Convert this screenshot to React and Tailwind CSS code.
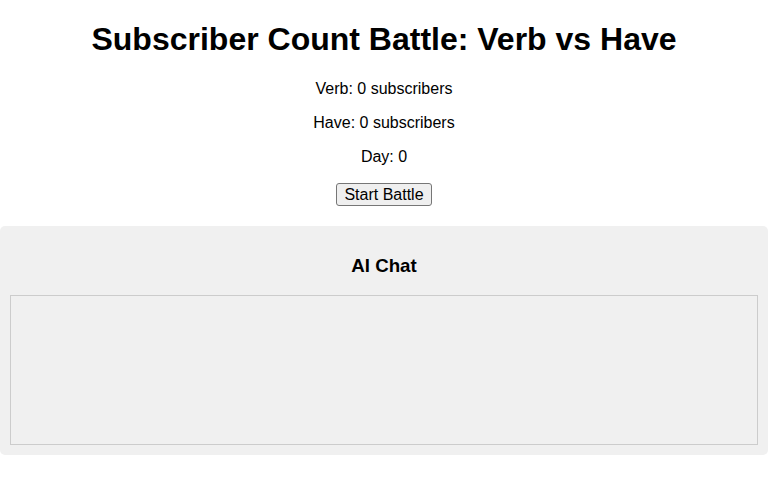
export default function App() {
  return (
    <div className="font-['Liberation_Sans',Arial,sans-serif] text-black text-base bg-white min-h-[480px] text-center">
      <h1 className="text-[32px] font-bold leading-[37px] pt-[21px]">Subscriber Count Battle: Verb vs Have</h1>
      <p className="mt-[22px] leading-[18px]">Verb: 0 subscribers</p>
      <p className="mt-4 leading-[18px]">Have: 0 subscribers</p>
      <p className="mt-4 leading-[18px]">Day: 0</p>
      <div className="mt-[17px] flex justify-center">
        <button className="bg-[#efefef] border border-[#767676] rounded-[3px] px-[7px] py-[1px] text-base leading-[19px]">Start Battle</button>
      </div>
      <div className="mt-[20px] bg-[#f0f0f0] rounded-[5px] p-[10px]">
        <h3 className="text-[18.72px] font-bold leading-[21px] mt-[19px] mb-[19px]">AI Chat</h3>
        <div className="h-[150px] border border-[#cccccc] bg-[#f0f0f0]"></div>
      </div>
    </div>
  );
}
